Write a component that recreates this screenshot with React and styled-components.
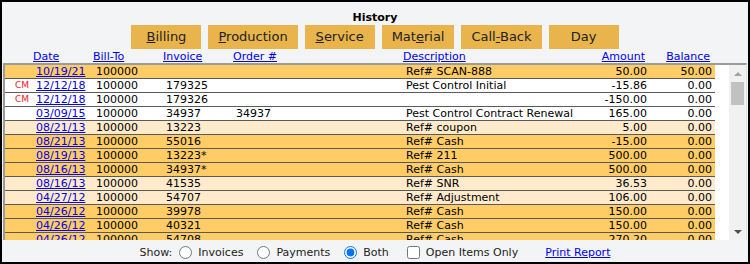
import React from "react";
import styled, { createGlobalStyle } from "styled-components";

const Global = createGlobalStyle`
  html, body { margin: 0; padding: 0; background: #f3f4f6; }
  body { font-family: "DejaVu Sans", Verdana, sans-serif; font-size: 11px; color: #000; }
`;

const COLS = "28px 60px 70px 70px 170px 177px 70px 65px";

const Frame = styled.div`
  width: 750px;
  height: 264px;
  box-sizing: border-box;
  border: 2px solid #000;
  background: #f3f4f6;
  display: flex;
  flex-direction: column;
  padding: 0 1px 0 1px;
`;

const Title = styled.div`
  margin-top: 8px;
  height: 15px;
  line-height: 15px;
  text-align: center;
  font-weight: bold;
  font-size: 11px;
  color: #000;
`;

const ButtonBar = styled.div`
  display: flex;
  justify-content: center;
  gap: 7px;
  height: 24px;
`;

const TabButton = styled.button`
  min-width: 70px;
  height: 24px;
  padding: 0 10px;
  border: none;
  background: #e8b44b;
  color: #222;
  font-family: "DejaVu Sans", Verdana, sans-serif;
  font-size: 13px;
  line-height: 24px;
  cursor: pointer;
`;

const Key = styled.span`
  text-decoration: underline;
`;

const HeaderRow = styled.div`
  display: grid;
  grid-template-columns: ${COLS};
  width: 710px;
  height: 13px;
  line-height: 13px;
  margin-left: -1px;
  margin-top: 1px;
`;

const HeadCell = styled.div`
  padding: 0 ${(p) => (p.$align === "right" ? "2px" : "3px")} 0 3px;
  text-align: ${(p) => p.$align || "left"};
  white-space: nowrap;
`;

const Link = styled.a`
  color: #0000ee;
  text-decoration: underline;
  cursor: pointer;
`;

const ScrollBox = styled.div`
  height: 175px;
  border-top: 2px solid #9b9b9b;
  border-left: 2px solid #9b9b9b;
  border-right: 1px solid #e2e2e2;
  background: #fff;
  display: flex;
`;

const RowList = styled.div`
  flex: 1;
  overflow: hidden;
`;

const ScrollTrack = styled.div`
  width: 17px;
  background: #f1f1f1;
  display: flex;
  flex-direction: column;
`;

const ArrowButton = styled.div`
  height: 17px;
  display: flex;
  align-items: center;
  justify-content: center;
`;

const Arrow = styled.span`
  width: 0;
  height: 0;
  border-left: 4px solid transparent;
  border-right: 4px solid transparent;
  ${(p) =>
    p.$dir === "up"
      ? `border-bottom: 4px solid ${p.$color};`
      : `border-top: 4px solid ${p.$color};`}
`;

const Thumb = styled.div`
  height: 23px;
  margin: 0 2px;
  background: #c1c1c1;
`;

const TrackSpace = styled.div`
  flex: 1;
`;

const TONES = { orange: "#ffcc66", light: "#ffeacb", white: "#ffffff" };

const Row = styled.div`
  display: grid;
  grid-template-columns: ${COLS};
  width: 710px;
  height: 13px;
  line-height: 13px;
  border-bottom: 1px solid #5a5a5a;
  background: ${(p) => TONES[p.$tone]};
`;

const Cell = styled.div`
  padding: 0 3px;
  text-align: ${(p) => p.$align || "left"};
  white-space: nowrap;
  overflow: hidden;
`;

const CmCell = styled.div`
  padding-left: 10px;
  color: #f02424;
  font-size: 9px;
  white-space: nowrap;
`;

const Footer = styled.div`
  flex: 1;
  display: flex;
  align-items: center;
  justify-content: center;
  color: #222;
  font-size: 11px;
  padding-top: 2px;
`;

const Option = styled.label`
  display: flex;
  align-items: center;
  gap: 6px;
  margin-left: ${(p) => p.$space}px;
  input { margin: 0; width: 13px; height: 13px; }
`;

const PrintLink = styled(Link)`
  margin-left: 27px;
`;

const rows = [
  ["orange", false, "10/19/21", "", "", "Ref# SCAN-888", "50.00", "50.00"],
  ["white", true, "12/12/18", "179325", "", "Pest Control Initial", "-15.86", "0.00"],
  ["white", true, "12/12/18", "179326", "", "", "-150.00", "0.00"],
  ["white", false, "03/09/15", "34937", "34937", "Pest Control Contract Renewal", "165.00", "0.00"],
  ["light", false, "08/21/13", "13223", "", "Ref# coupon", "5.00", "0.00"],
  ["orange", false, "08/21/13", "55016", "", "Ref# Cash", "-15.00", "0.00"],
  ["orange", false, "08/19/13", "13223*", "", "Ref# 211", "500.00", "0.00"],
  ["orange", false, "08/16/13", "34937*", "", "Ref# Cash", "500.00", "0.00"],
  ["light", false, "08/16/13", "41535", "", "Ref# SNR", "36.53", "0.00"],
  ["light", false, "04/27/12", "54707", "", "Ref# Adjustment", "106.00", "0.00"],
  ["orange", false, "04/26/12", "39978", "", "Ref# Cash", "150.00", "0.00"],
  ["orange", false, "04/26/12", "40321", "", "Ref# Cash", "150.00", "0.00"],
  ["orange", false, "04/26/12", "54708", "", "Ref# Cash", "270.20", "0.00"],
];

export default function App() {
  return (
    <>
      <Global />
      <Frame>
        <Title>History</Title>
        <ButtonBar>
          <TabButton><Key>B</Key>illing</TabButton>
          <TabButton><Key>P</Key>roduction</TabButton>
          <TabButton><Key>S</Key>ervice</TabButton>
          <TabButton>Mat<Key>e</Key>rial</TabButton>
          <TabButton>Call<Key>-</Key>Back</TabButton>
          <TabButton>Day</TabButton>
        </ButtonBar>
        <HeaderRow>
          <HeadCell />
          <HeadCell><Link>Date</Link></HeadCell>
          <HeadCell><Link>Bill-To</Link></HeadCell>
          <HeadCell><Link>Invoice</Link></HeadCell>
          <HeadCell><Link>Order #</Link></HeadCell>
          <HeadCell><Link>Description</Link></HeadCell>
          <HeadCell $align="right"><Link>Amount</Link></HeadCell>
          <HeadCell $align="right"><Link>Balance</Link></HeadCell>
        </HeaderRow>
        <ScrollBox>
          <RowList>
            {rows.map((r, i) => (
              <Row key={i} $tone={r[0]}>
                <CmCell>{r[1] ? "CM" : ""}</CmCell>
                <Cell><Link>{r[2]}</Link></Cell>
                <Cell>100000</Cell>
                <Cell>{r[3]}</Cell>
                <Cell>{r[4]}</Cell>
                <Cell>{r[5]}</Cell>
                <Cell $align="right">{r[6]}</Cell>
                <Cell $align="right">{r[7]}</Cell>
              </Row>
            ))}
          </RowList>
          <ScrollTrack>
            <ArrowButton><Arrow $dir="up" $color="#a3a3a3" /></ArrowButton>
            <Thumb />
            <TrackSpace />
            <ArrowButton><Arrow $dir="down" $color="#505050" /></ArrowButton>
          </ScrollTrack>
        </ScrollBox>
        <Footer>
          <span>Show:</span>
          <Option $space={7}><input type="radio" name="show" />Invoices</Option>
          <Option $space={14}><input type="radio" name="show" />Payments</Option>
          <Option $space={14}><input type="radio" name="show" defaultChecked />Both</Option>
          <Option $space={18}><input type="checkbox" />Open Items Only</Option>
          <PrintLink>Print Report</PrintLink>
        </Footer>
      </Frame>
    </>
  );
}
